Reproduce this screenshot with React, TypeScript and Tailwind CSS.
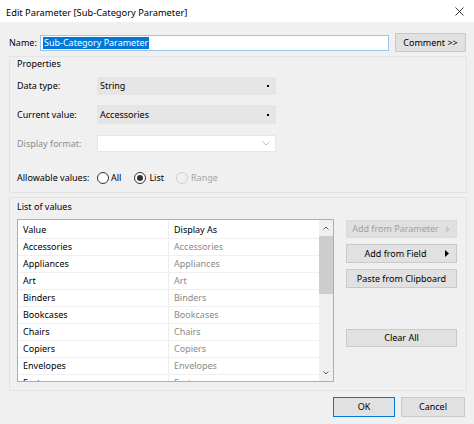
import React from "react";

const font = { fontFamily: '"Noto Sans", "Open Sans", sans-serif' };

function Tri({ color = "#000" }: { color?: string }) {
  return (
    <svg width="4" height="7" viewBox="0 0 4 7">
      <path d="M0 0 L4 3.5 L0 7 Z" fill={color} />
    </svg>
  );
}

function Radio({ checked, disabled }: { checked?: boolean; disabled?: boolean }) {
  return (
    <span
      className={`flex items-center justify-center w-[12px] h-[12px] rounded-full border shrink-0 ${
        disabled ? "border-[#d0d0d0] bg-[#f0f0f0]" : "border-[#333333] bg-white"
      }`}
    >
      {checked && <span className="w-[6px] h-[6px] rounded-full bg-[#333333]" />}
    </span>
  );
}

const rows = [
  "Accessories",
  "Appliances",
  "Art",
  "Binders",
  "Bookcases",
  "Chairs",
  "Copiers",
  "Envelopes",
  "Fasteners",
];

export default function App() {
  return (
    <div
      className="w-[474px] h-[424px] bg-[#f0f0f0] overflow-hidden text-[9px] text-black flex flex-col whitespace-nowrap"
      style={font}
    >
      {/* Title bar */}
      <div className="h-[22px] bg-white flex items-center justify-between pl-[6px] pr-[8px] shrink-0">
        <span className="text-[9.3px] leading-[22px] pt-[3px]">Edit Parameter [Sub-Category Parameter]</span>
        <svg width="9" height="9" viewBox="0 0 9 9" className="mr-[2px] mt-[1px]">
          <path d="M0.5 0.5 L8.5 8.5 M8.5 0.5 L0.5 8.5" stroke="#222" strokeWidth="0.9" />
        </svg>
      </div>

      {/* Name row */}
      <div className="flex items-center mt-[11px] pl-[9px] pr-[8px] h-[19px]">
        <span className="w-[31px] shrink-0 leading-[19px]">Name:</span>
        <div className="w-[349px] shrink-0 h-[16px] border border-[#9cc4ec] bg-white flex items-center pl-[2px]">
          <span className="bg-[#0078d7] text-white leading-[12px] px-[1px]">Sub-Category Parameter</span>
        </div>
        <button className="ml-[6px] w-[71px] shrink-0 h-[19px] bg-[#e1e1e1] border border-[#c9c9c9] flex items-center justify-center leading-[17px]">
          Comment &gt;&gt;
        </button>
      </div>

      {/* Properties group */}
      <div className="mt-[4px] ml-[9px] w-[458px] h-[137px] border border-[#e3e3e3] flex flex-col pl-[7px]">
        <div className="h-[14px] leading-[14px]">Properties</div>
        <div className="flex items-center mt-[6px] h-[18px]">
          <span className="w-[80px] shrink-0">Data type:</span>
          <div className="w-[179px] h-[18px] bg-[#e5e5e5] flex items-center justify-between pl-[3px] pr-[7px]">
            <span>String</span>
            <span className="w-[2px] h-[2px] bg-black" />
          </div>
        </div>
        <div className="flex items-center mt-[10px] h-[19px]">
          <span className="w-[80px] shrink-0">Current value:</span>
          <div className="w-[179px] h-[19px] bg-[#e5e5e5] flex items-center justify-between pl-[3px] pr-[7px]">
            <span>Accessories</span>
            <span className="w-[2px] h-[2px] bg-black" />
          </div>
        </div>
        <div className="flex items-center mt-[11px] h-[17px]">
          <span className="w-[80px] shrink-0 text-[#8d8d8d]">Display format:</span>
          <div className="w-[179px] h-[17px] bg-white border border-[#e6e6e6] flex items-center justify-end pr-[5px]">
            <svg width="8" height="5" viewBox="0 0 8 5">
              <path d="M0.5 0.5 L4 4 L7.5 0.5" stroke="#bdbdbd" fill="none" strokeWidth="1" />
            </svg>
          </div>
        </div>
        <div className="flex items-center mt-[19px] h-[14px]">
          <span className="w-[80px] shrink-0">Allowable values:</span>
          <Radio />
          <span className="ml-[2px]">All</span>
          <span className="ml-[13px] flex items-center">
            <Radio checked />
            <span className="ml-[3px]">List</span>
          </span>
          <span className="ml-[12px] flex items-center">
            <Radio disabled />
            <span className="ml-[3px] text-[#a6a6a6]">Range</span>
          </span>
        </div>
      </div>

      {/* List of values group */}
      <div className="mt-[4px] ml-[9px] w-[458px] h-[194px] border border-[#e3e3e3] flex flex-col pl-[7px]">
        <div className="h-[14px] leading-[14px] mt-[2px]">List of values</div>
        <div className="flex mt-[5px]">
          {/* list box */}
          <div className="w-[317px] h-[163px] border border-[#adadad] bg-white flex overflow-hidden">
            <div className="flex-1 flex flex-col pt-[1px] overflow-hidden">
              <div className="flex h-[17px] items-center shrink-0">
                <span className="w-[151px] pl-[5px] border-r border-[#ececec] h-full flex items-center">Value</span>
                <span className="pl-[5px]">Display As</span>
              </div>
              {rows.map((r) => (
                <div key={r} className="flex h-[17px] items-center shrink-0 border-t border-[#f0f0f0]">
                  <span className="w-[151px] pl-[5px] border-r border-[#ececec] h-full flex items-center">{r}</span>
                  <span className="pl-[5px] text-[#8a8a8a]">{r}</span>
                </div>
              ))}
            </div>
            {/* scrollbar */}
            <div className="w-[14px] bg-[#f0f0f0] flex flex-col items-center">
              <div className="h-[16px] flex items-center justify-center shrink-0">
                <svg width="6" height="4" viewBox="0 0 6 4">
                  <path d="M0.5 3.5 L3 1 L5.5 3.5" stroke="#606060" fill="none" strokeWidth="1" />
                </svg>
              </div>
              <div className="w-[14px] h-[58px] bg-[#cdcdcd] shrink-0" />
              <div className="flex-1" />
              <div className="h-[16px] flex items-center justify-center shrink-0">
                <svg width="6" height="4" viewBox="0 0 6 4">
                  <path d="M0.5 0.5 L3 3 L5.5 0.5" stroke="#606060" fill="none" strokeWidth="1" />
                </svg>
              </div>
            </div>
          </div>
          {/* side buttons */}
          <div className="ml-[12px] w-[111px] flex flex-col pt-[1px]">
            <button className="h-[18px] bg-[#e0e0e0] border border-[#dadada] text-[#a0a0a0] flex items-center justify-center relative pr-[12px]">
              Add from Parameter
              <span className="absolute right-[6px] top-[5px]"><Tri color="#c8c8c8" /></span>
            </button>
            <button className="mt-[6px] h-[19px] bg-[#e1e1e1] border border-[#c9c9c9] flex items-center justify-center relative pr-[12px]">
              Add from Field
              <span className="absolute right-[7px] top-[5px]"><Tri /></span>
            </button>
            <button className="mt-[6px] h-[19px] bg-[#e1e1e1] border border-[#c9c9c9] flex items-center justify-center">
              Paste from Clipboard
            </button>
            <button className="mt-[41px] h-[18px] bg-[#e1e1e1] border border-[#c9c9c9] flex items-center justify-center">
              Clear All
            </button>
          </div>
        </div>
      </div>

      {/* Bottom buttons */}
      <div className="flex mt-[6px] pl-[333px]">
        <button className="w-[62px] h-[20px] bg-[#e1e1e1] border border-[#0078d7] flex items-center justify-center">
          OK
        </button>
        <button className="ml-[6px] w-[64px] h-[20px] bg-[#e1e1e1] border border-[#c9c9c9] flex items-center justify-center">
          Cancel
        </button>
      </div>
    </div>
  );
}
